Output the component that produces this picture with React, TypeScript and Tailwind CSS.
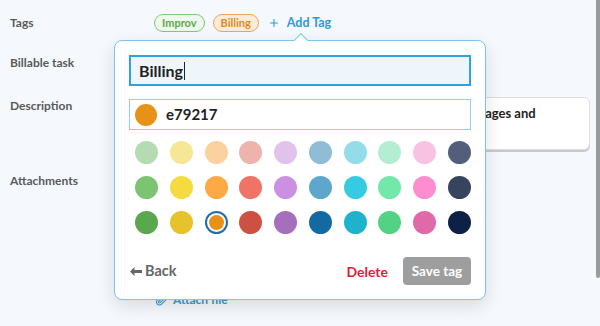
import { Plus, Paperclip } from 'lucide-react';

const swatches = [
  ['#b5dbb2', '#f5e796', '#fbd19f', '#eeb3ad', '#e1c2ea', '#8fbdd6', '#92dde9', '#b3eed3', '#f8c3e3', '#525e7a'],
  ['#7cc471', '#f5db3f', '#fdaa46', '#ef7367', '#cb90e2', '#5da7cc', '#35cbe0', '#74e8ab', '#fe8dcf', '#36445f'],
  ['#5aa84d', '#e6c32c', '#e79217', '#cd5143', '#a66fbd', '#136aa3', '#1fb2cc', '#53d286', '#e06aa9', '#0e2046'],
];

const selected = '#e79217';

function BackArrow() {
  return (
    <svg width="12" height="9" viewBox="0 0 12 9" className="fill-[#666]">
      <path d="M0 4.5 L4.5 0 L4.5 3 L12 3 L12 6 L4.5 6 L4.5 9 Z" />
    </svg>
  );
}

function TagPopover() {
  return (
    <div className="absolute left-[114px] top-[40px] w-[372px] h-[260px] rounded-[8px] border border-[#7cc4ea] bg-white shadow-[0_6px_18px_rgba(0,0,0,0.12)] px-[14px] pt-[14px]">
      {/* caret */}
      <div className="absolute -top-[6px] left-[181px] w-[10px] h-[10px] rotate-45 border-l border-t border-[#7cc4ea] bg-white" />

      <div className="flex h-[31px] items-center border-2 border-[#2ea3e3] bg-[#eef6fc] px-[8px]">
        <span className="text-[16px] font-bold text-[#222]">Billing</span>
        <span className="ml-px h-[18px] w-px bg-[#222]" />
      </div>

      <div className="mt-[13px] flex h-[31px] items-center gap-[9px] border border-[#8fd0f0] bg-white px-[5px]">
        <span className="h-[22px] w-[22px] rounded-full bg-[#e79217]" />
        <span className="text-[15px] font-bold text-[#222]">e79217</span>
      </div>

      <div className="ml-[6px] mt-[11px] flex flex-col gap-[12px]">
        {swatches.map((row, i) => (
          <div key={i} className="flex justify-between">
            {row.map((c) =>
              c === selected && i === 2 ? (
                <div key={c} className="flex h-[23px] w-[23px] items-center justify-center rounded-full border-2 border-[#1f6fae] bg-white">
                  <div className="h-[15px] w-[15px] rounded-full" style={{ backgroundColor: c }} />
                </div>
              ) : (
                <div key={c} className="h-[23px] w-[23px] rounded-full" style={{ backgroundColor: c }} />
              )
            )}
          </div>
        ))}
      </div>

      <div className="mt-[23px] flex h-[28px] items-center">
        <div className="flex items-center gap-[3px] pl-px">
          <BackArrow />
          <span className="text-[14.5px] font-bold text-[#666]">Back</span>
        </div>
        <div className="ml-auto flex items-center gap-[15px]">
          <span className="text-[14px] font-bold text-[#e8193c]">Delete</span>
          <button className="h-[28px] w-[68px] rounded-[4px] bg-[#9e9e9e] text-[13.5px] font-bold text-white">Save tag</button>
        </div>
      </div>
    </div>
  );
}

export default function App() {
  return (
    <div className="relative h-[326px] w-full overflow-hidden bg-[#f5f9fd] font-['Lato','Noto_Sans',sans-serif]">
      <div className="px-[10px] pt-[14px]">
        <div className="flex h-[18px] items-center">
          <div className="w-[144px] text-[12px] font-bold text-[#58595b]">Tags</div>
          <div className="flex items-center">
            <span className="flex h-[18px] items-center rounded-full border border-[#7ec87a] bg-[#eef8ec] px-[7px] text-[11px] font-bold text-[#5aaa50]">Improv</span>
            <span className="ml-[8px] flex h-[18px] items-center rounded-full border border-[#eea55a] bg-[#fdebd9] px-[7px] text-[11px] font-bold text-[#e08a1e]">Billing</span>
            <span className="ml-[9px] flex items-center gap-[7px] text-[12.5px] font-bold text-[#2b9ae0]">
              <Plus size={12} strokeWidth={2.2} />
              Add Tag
            </span>
          </div>
        </div>

        <div className="mt-[23px] flex h-[16px] items-center">
          <div className="w-[144px] text-[12px] font-bold text-[#58595b]">Billable task</div>
        </div>

        <div className="mt-[26px] flex">
          <div className="w-[144px] pt-px text-[12px] leading-[16px] font-bold text-[#58595b]">Description</div>
          <div className="h-[53px] flex-1 rounded-[6px] border border-[#dcdcdc] bg-white px-[10px] pt-[6px] shadow-[0_2px_0_#c9c9c9] text-[13px] leading-[18px] font-bold text-[#222]">
            Write a short summary here, add helpful links, notes, images and
            <br />
            more
          </div>
        </div>

        <div className="mt-[23px] flex">
          <div className="w-[144px] text-[12px] leading-[16px] font-bold text-[#58595b]">Attachments</div>
          <div className="flex flex-col">
            <div className="h-[119px]" />
            <div className="flex h-[16px] items-center gap-[6px] pl-px text-[12px] font-bold text-[#2b9ae0]">
              <Paperclip size={12} strokeWidth={2.2} />
              Attach file
            </div>
          </div>
        </div>
      </div>

      <TagPopover />

      <div className="absolute right-0 top-0 h-[278px] w-[4px] rounded-b-[2px] bg-[#9a9a9a]" />
    </div>
  );
}
